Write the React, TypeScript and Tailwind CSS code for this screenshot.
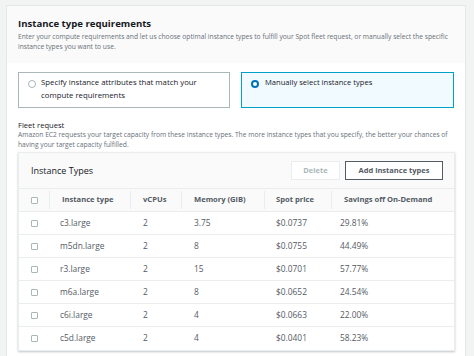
import React from "react";

const rows = [
  { type: "c3.large", vcpu: "2", mem: "3.75", price: "$0.0737", save: "29.81%" },
  { type: "m5dn.large", vcpu: "2", mem: "8", price: "$0.0755", save: "44.49%" },
  { type: "r3.large", vcpu: "2", mem: "15", price: "$0.0701", save: "57.77%" },
  { type: "m6a.large", vcpu: "2", mem: "8", price: "$0.0652", save: "24.54%" },
  { type: "c6i.large", vcpu: "2", mem: "4", price: "$0.0663", save: "22.00%" },
  { type: "c5d.large", vcpu: "2", mem: "4", price: "$0.0401", save: "58.23%" },
];

const cols = "grid grid-cols-[31px_81px_51px_83px_67px_1fr]";

function Checkbox() {
  return <div className="w-[7px] h-[7px] border border-[#aab7b8] rounded-[1px] bg-white" />;
}

export default function App() {
  return (
    <div className="w-[474px] h-[356px] overflow-hidden bg-[#f2f3f3] pt-[5px] pl-[6px] font-['Open_Sans',sans-serif]">
      <div className="w-[460px] h-[360px] bg-white border-l border-t border-r border-[#e4e7e7]">
        {/* Header */}
        <div className="bg-[#fafafa] h-[57px] px-[11px] pt-[11px]">
          <h2 className="text-[9.6px] leading-[14px] font-bold text-[#16191f]">Instance type requirements</h2>
          <p className="mt-[1px] text-[6.7px] leading-[9.5px] text-[#687078]">
            Enter your compute requirements and let us choose optimal instance types to fulfill your Spot fleet request, or manually select the specific instance types you want to use.
          </p>
        </div>

        <div className="px-[11px] pt-[9px]">
          {/* Radio cards */}
          <div className="flex gap-[11px]">
            <div className="w-[212px] h-[36px] border border-[#aab7b8] flex items-start pl-[9px] pt-[3px] gap-[5px]">
              <div className="mt-[4px] w-[8px] h-[8px] rounded-full border border-[#aab7b8] bg-white shrink-0" />
              <span className="max-w-[165px] text-[7.8px] leading-[13px] text-[#16191f]">
                Specify instance attributes that match your compute requirements
              </span>
            </div>
            <div className="w-[213px] h-[36px] border border-[#00a1c9] bg-[#f1faff] flex items-start pl-[9px] pt-[3px] gap-[6px]">
              <div className="mt-[4px] w-[8px] h-[8px] rounded-full border-[2.5px] border-[#0073bb] bg-white shrink-0" />
              <span className="text-[7.6px] leading-[13px] text-[#16191f]">Manually select instance types</span>
            </div>
          </div>

          {/* Fleet request */}
          <div className="mt-[12px]">
            <div className="text-[7.6px] leading-[10px] text-[#16191f]">Fleet request</div>
            <p className="text-[6.7px] leading-[9.5px] text-[#687078]">
              Amazon EC2 requests your target capacity from these instance types. The more instance types that you specify, the better your chances of having your target capacity fulfilled.
            </p>
          </div>

          {/* Table */}
          <div className="mt-[3px] w-[437px] border border-[#eaeded] shadow-[0_1px_2px_rgba(0,28,36,0.25)] bg-white">
            <div className="bg-[#fafafa] h-[36px] flex items-center justify-between pl-[12px] pr-[11px] border-b border-[#eaeded]">
              <span className="text-[9px] text-[#16191f]">Instance Types</span>
              <div className="flex gap-[5px]">
                <button className="w-[49px] h-[19px] border border-[#eaeded] bg-white text-[7.5px] font-bold text-[#aab7b8]">Delete</button>
                <button className="w-[98px] h-[19px] border border-[#545b64] bg-white text-[7.5px] font-bold text-[#545b64]">Add instance types</button>
              </div>
            </div>
            <div className={`${cols} bg-[#fafafa] h-[23px] border-b border-[#eaeded] text-[7.6px] font-bold text-[#545b64]`}>
              <div className="flex items-center justify-center border-r border-[#eaeded] my-[2px]"><Checkbox /></div>
              <div className="flex items-center pl-[12px] border-r border-[#eaeded] my-[2px]">Instance type</div>
              <div className="flex items-center pl-[12px] border-r border-[#eaeded] my-[2px]">vCPUs</div>
              <div className="flex items-center pl-[12px] border-r border-[#eaeded] my-[2px]">Memory (GiB)</div>
              <div className="flex items-center pl-[11px] border-r border-[#eaeded] my-[2px]">Spot price</div>
              <div className="flex items-center pl-[12px] my-[2px]">Savings off On-Demand</div>
            </div>
            {rows.map((r, i) => (
              <div
                key={r.type}
                className={`${cols} h-[23px] text-[8.4px] text-[#545b64] ${i < rows.length - 1 ? "border-b border-[#eaeded]" : ""}`}
              >
                <div className="flex items-center justify-center"><Checkbox /></div>
                <div className="flex items-center pl-[10px]">{r.type}</div>
                <div className="flex items-center pl-[12px]">{r.vcpu}</div>
                <div className="flex items-center pl-[12px]">{r.mem}</div>
                <div className="flex items-center pl-[11px]">{r.price}</div>
                <div className="flex items-center pl-[8px]">{r.save}</div>
              </div>
            ))}
          </div>
        </div>
      </div>
    </div>
  );
}
